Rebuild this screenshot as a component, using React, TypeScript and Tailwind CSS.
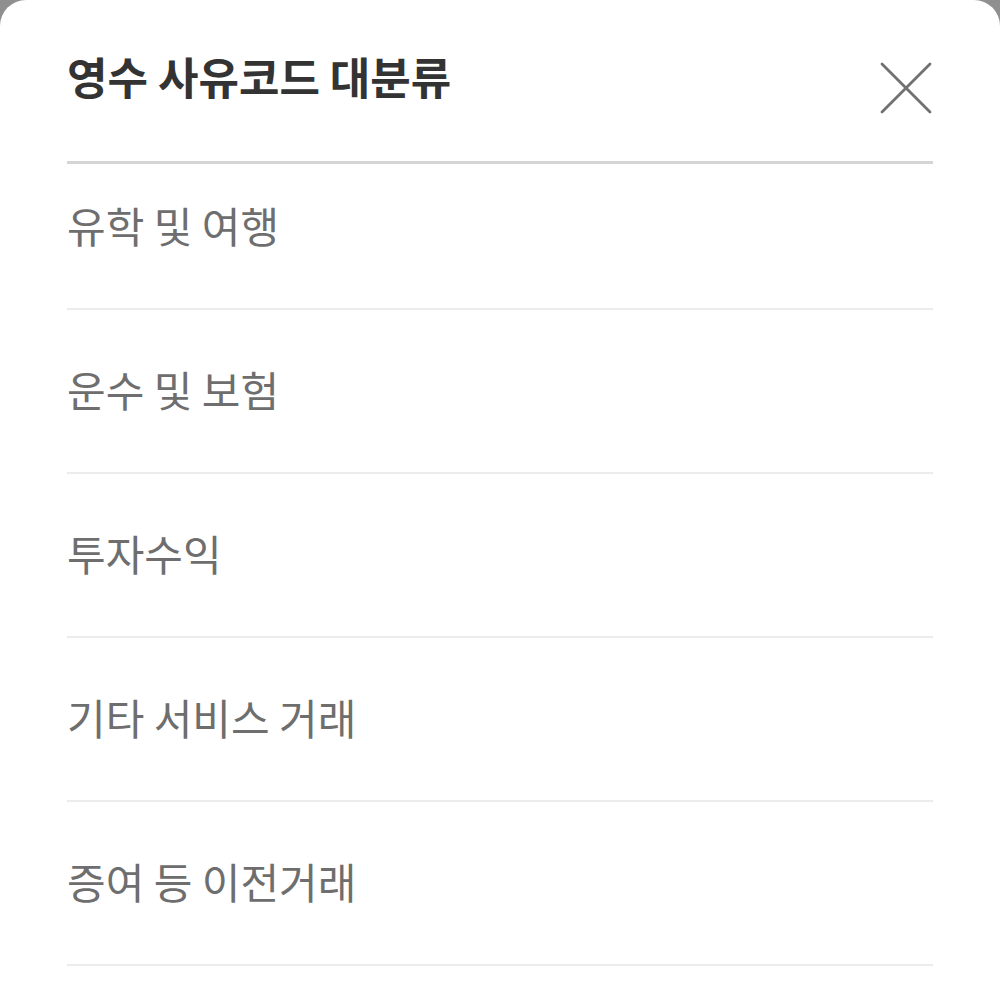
import { useState } from 'react';

const categories = ['유학 및 여행', '운수 및 보험', '투자수익', '기타 서비스 거래', '증여 등 이전거래'];

const font = { fontFamily: '"Noto Sans CJK KR", "Noto Sans", sans-serif' };

function CloseIcon() {
  return (
    <svg width="54" height="54" viewBox="0 0 54 54" fill="none" stroke="#707070" strokeWidth="2.8" strokeLinecap="round">
      <path d="M3 3L51 51M51 3L3 51" />
    </svg>
  );
}

export default function App() {
  const [selected, setSelected] = useState<string | null>(null);

  return (
    <div className="h-screen w-full bg-[#8f8f8f]" style={font}>
      <div className="h-full w-full rounded-t-[26px] bg-white px-[67px]">
        <div className="flex h-[164px] items-start justify-between border-b-[3px] border-[#d5d5d5]">
          <h1 className="mt-[49px] text-[44px] font-bold leading-[54px] text-[#333333]">영수 사유코드 대분류</h1>
          <button className="mt-[61px]" onClick={() => setSelected(null)}>
            <CloseIcon />
          </button>
        </div>
        <ul>
          {categories.map((name, i) => (
            <li key={name} className="border-b-2 border-[#ececec]">
              <button
                onClick={() => setSelected(name)}
                className={`flex w-full items-end pb-[56px] text-left text-[42px] font-normal leading-[54px] ${
                  i === 0 ? 'h-[144px]' : 'h-[162px]'
                } ${selected === name ? 'text-[#333333]' : 'text-[#6e6e6e]'}`}
              >
                {name}
              </button>
            </li>
          ))}
        </ul>
      </div>
    </div>
  );
}
